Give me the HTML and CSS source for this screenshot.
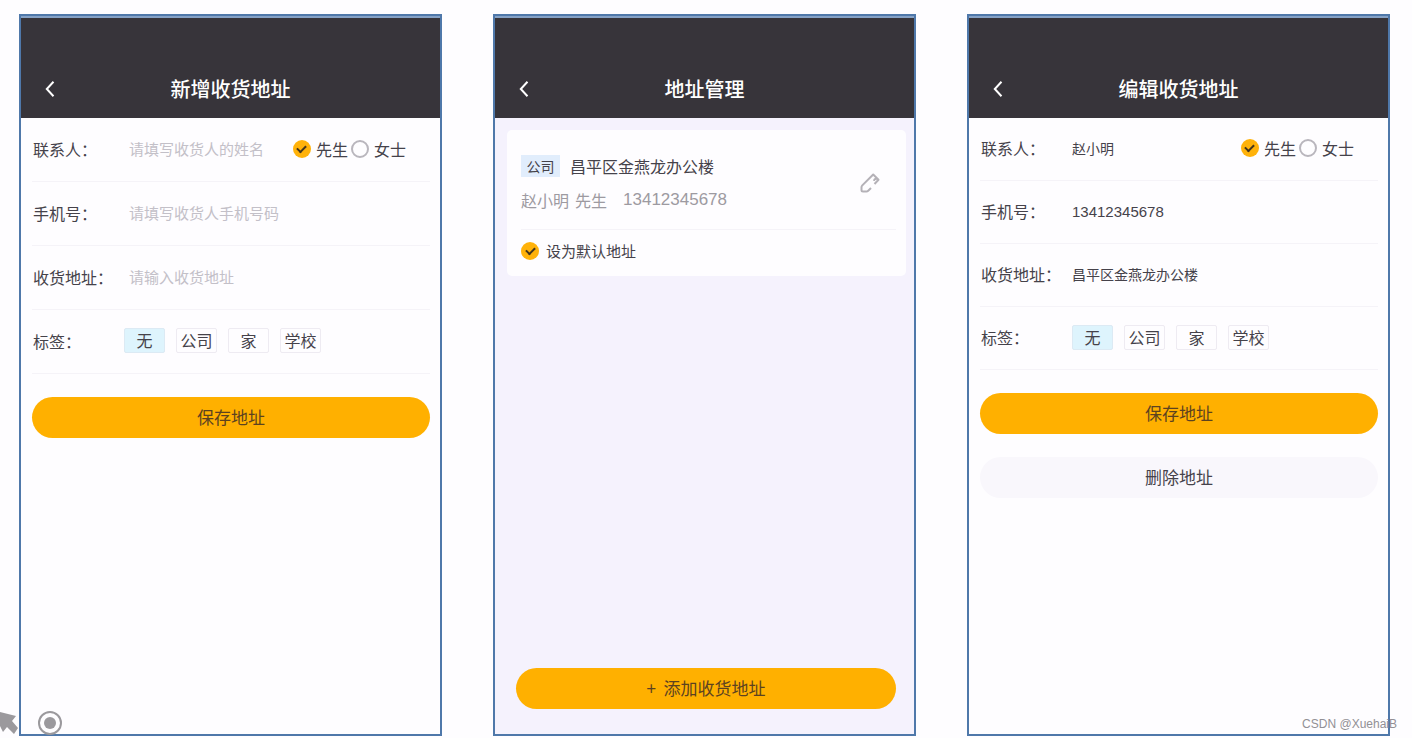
FILE: index.html
```
<!DOCTYPE html>
<html lang="zh-CN">
<head>
  <meta charset="UTF-8">
  <meta name="viewport" content="width=device-width, initial-scale=1.0">
  <title>收货地址</title>
  <link rel="stylesheet" href="styles.css">
</head>
<body>
  <main class="screens">
    <section class="phone">
      <header class="bar">
        <a class="back" href="#" aria-label="返回">
          <svg width="10" height="16" viewBox="0 0 10 16"><path d="M8.500 .8L1.800 8l6.700 7.200"/></svg>
        </a>
        <h1>新增收货地址</h1>
      </header>
      <form class="form">
        <div class="row">
          <label class="name" for="add-user">联系人：</label>
          <input class="field" id="add-user" type="text" placeholder="请填写收货人的姓名">
          <div class="sex">
            <label><input class="check" type="radio" name="add-sex" checked>先生</label>
            <label><input class="check" type="radio" name="add-sex">女士</label>
          </div>
        </div>
        <div class="row">
          <label class="name" for="add-tel">手机号：</label>
          <input class="field" id="add-tel" type="tel" placeholder="请填写收货人手机号码">
        </div>
        <div class="row">
          <label class="name" for="add-addr">收货地址：</label>
          <input class="field" id="add-addr" type="text" placeholder="请输入收货地址">
        </div>
        <div class="row">
          <span class="name">标签：</span>
          <div class="tags">
            <button class="tag tag--active" type="button">无</button>
            <button class="tag" type="button">公司</button>
            <button class="tag" type="button">家</button>
            <button class="tag" type="button">学校</button>
          </div>
        </div>
        <button class="btn" type="button">保存地址</button>
      </form>
    </section>

    <section class="phone phone--list">
      <header class="bar">
        <a class="back" href="#" aria-label="返回">
          <svg width="10" height="16" viewBox="0 0 10 16"><path d="M8.500 .8L1.800 8l6.700 7.200"/></svg>
        </a>
        <h1>地址管理</h1>
      </header>
      <article class="card">
        <div class="card-top">
          <div class="info">
            <p class="addr"><span class="label">公司</span>昌平区金燕龙办公楼</p>
            <p class="user"><span>赵小明</span><span>先生</span><span class="tel">13412345678</span></p>
          </div>
          <a class="edit" href="#" aria-label="编辑">
            <svg width="20" height="20" viewBox="0 0 20 20"><path d="M11 15l-2.800 2.800c-.6.600-1 .8-1.800.8H3c-1 0-1.500-.5-1.500-1.500v-2.900c0-.8.200-1.200.8-1.800L13.200 1.500 18.500 6.800 14.500 11M14 7.800c.2-1.800 1.800-2.400 3.600-1.600"/></svg>
          </a>
        </div>
        <label class="default"><input class="check" type="radio" name="default" checked>设为默认地址</label>
      </article>
      <button class="btn btn--add" type="button">+&nbsp; 添加收货地址</button>
    </section>

    <section class="phone phone--edit">
      <header class="bar">
        <a class="back" href="#" aria-label="返回">
          <svg width="10" height="16" viewBox="0 0 10 16"><path d="M8.500 .8L1.800 8l6.700 7.200"/></svg>
        </a>
        <h1>编辑收货地址</h1>
      </header>
      <form class="form">
        <div class="row">
          <label class="name" for="edit-user">联系人：</label>
          <input class="field" id="edit-user" type="text" value="赵小明">
          <div class="sex">
            <label><input class="check" type="radio" name="edit-sex" checked>先生</label>
            <label><input class="check" type="radio" name="edit-sex">女士</label>
          </div>
        </div>
        <div class="row">
          <label class="name" for="edit-tel">手机号：</label>
          <input class="field field--tel" id="edit-tel" type="tel" value="13412345678">
        </div>
        <div class="row">
          <label class="name" for="edit-addr">收货地址：</label>
          <input class="field" id="edit-addr" type="text" value="昌平区金燕龙办公楼">
        </div>
        <div class="row">
          <span class="name">标签：</span>
          <div class="tags">
            <button class="tag tag--active" type="button">无</button>
            <button class="tag" type="button">公司</button>
            <button class="tag" type="button">家</button>
            <button class="tag" type="button">学校</button>
          </div>
        </div>
        <button class="btn" type="button">保存地址</button>
        <button class="btn btn--delete" type="button">删除地址</button>
      </form>
    </section>
  </main>

  <svg class="pointer" width="64" height="30" viewBox="0 0 64 30">
    <path d="M0 4l16 4-4 5 6 7-4 6-7-7-4 5-3-6z"/>
    <circle class="ring" cx="50" cy="15" r="11"/>
    <circle cx="50" cy="15" r="6"/>
  </svg>
  <span class="watermark">CSDN @XuehaiB</span>
</body>
</html>
```
FILE: styles.css
```
* {
  box-sizing: border-box;
}
body {
  margin: 0;
  position: relative;
  min-height: 100vh;
  display: flex;
  background: #fefdff;
  color: #45424a;
  font-family: "Noto Sans CJK SC", sans-serif;
  font-size: 16px;
}
h1, p {
  margin: 0;
}
button, input {
  font-family: inherit;
  color: inherit;
}
.screens {
  flex: 1;
  display: grid;
  grid-template-columns: repeat(3, minmax(0, 1fr));
  gap: 51px;
  padding: 14px 22px 2px 19px;
}
.phone {
  display: flex;
  flex-direction: column;
  border: 2px solid #4f78aa;
  background: #fefdff;
}
.phone--list {
  background: #f5f2fd;
}

/* шапка */
.bar {
  display: grid;
  grid-template-columns: 56px 1fr 56px;
  align-items: center;
  height: 102px;
  padding-top: 42px;
  border-top: 2px solid #86a2c6;
  background: #37343a;
  color: #fff;
}
.bar h1 {
  font-size: 20px;
  font-weight: 500;
  line-height: 30px;
  text-align: center;
}
.back {
  display: flex;
  padding-left: 24px;
}
.back path {
  fill: none;
  stroke: #fff;
  stroke-width: 2;
}

/* форма */
.form {
  padding: 0 10px 0 11px;
}
.row {
  display: flex;
  align-items: center;
  height: 64px;
  padding-bottom: 2px;
  border-bottom: 1px solid #f5f3f8;
}
.phone--edit .row {
  height: 63px;
}
.name {
  flex: none;
  width: 92px;
  padding-left: 1px;
  line-height: 24px;
  white-space: nowrap;
}
.field {
  flex: 1;
  min-width: 0;
  padding: 0 5px;
  border: none;
  outline: none;
  background: transparent;
  font-size: 15px;
}
.field::placeholder {
  color: #c3c0c8;
}
.phone--edit .field {
  padding: 0;
  font-size: 14px;
}
.phone--edit .field--tel {
  font-family: "Liberation Sans", sans-serif;
  font-size: 15px;
}
.sex {
  display: flex;
  gap: 3px;
  margin-right: 24px;
}
.sex label, .default {
  display: flex;
  align-items: center;
  gap: 5px;
  line-height: 24px;
}
.check {
  appearance: none;
  width: 18px;
  height: 18px;
  margin: 0;
  border: 2px solid #b9b6bd;
  border-radius: 50%;
}
.check:checked {
  display: grid;
  place-items: center;
  border: none;
  background: #ffb20a;
}
.check:checked::before {
  content: "";
  box-sizing: border-box;
  width: 9px;
  height: 6px;
  margin-bottom: 2px;
  border-left: 2px solid #43351c;
  border-bottom: 2px solid #43351c;
  transform: rotate(-45deg);
}
.tags {
  display: flex;
  gap: 11px;
}
.tag {
  width: 41px;
  height: 25px;
  padding: 0;
  border: 1px solid #eeebf2;
  border-radius: 2px;
  background: transparent;
  font-size: 16px;
  line-height: 23px;
}
.tag--active {
  border-color: #dceaf4;
  background: #def4fd;
}

.btn {
  display: block;
  width: 100%;
  height: 41px;
  margin-top: 23px;
  padding: 0 0 2px;
  border: none;
  border-radius: 21px;
  background: #ffb000;
  color: #5c4220;
  font-size: 17px;
  cursor: pointer;
}
.btn--delete {
  background: #f9f7fc;
  color: #45424a;
}
.btn--add {
  width: auto;
  margin: auto 18px 25px 21px;
}

/* карточка адреса */
.card {
  margin: 12px 8px 0 12px;
  padding: 0 10px 4px 14px;
  border-radius: 5px;
  background: #fefdff;
}
.card-top {
  display: flex;
  align-items: center;
  justify-content: space-between;
  height: 100px;
  padding: 6px 16px 0 0;
  border-bottom: 1px solid #f5f3f8;
}
.addr {
  display: flex;
  align-items: center;
  gap: 10px;
  line-height: 24px;
}
.label {
  width: 39px;
  background: #e1edfc;
  font-size: 14px;
  line-height: 22px;
  text-align: center;
}
.user {
  display: flex;
  gap: 6px;
  margin-top: 10px;
  color: #9d9aa1;
  line-height: 24px;
}
.tel {
  margin-left: 10px;
  font-family: "Liberation Sans", sans-serif;
  font-size: 17px;
}
.edit {
  display: flex;
}
.edit path {
  fill: none;
  stroke: #b4b1b7;
  stroke-width: 2;
  stroke-linejoin: round;
}
.default {
  height: 42px;
  gap: 7px;
  font-size: 15px;
}

.pointer {
  position: absolute;
  left: 0;
  bottom: 0;
  fill: #9b999d;
}
.pointer .ring {
  fill: none;
  stroke: #9b999d;
  stroke-width: 2;
}
.watermark {
  position: absolute;
  right: 15px;
  bottom: 6px;
  color: #929095;
  font-family: "Liberation Sans", sans-serif;
  font-size: 12px;
  line-height: 16px;
}
```
